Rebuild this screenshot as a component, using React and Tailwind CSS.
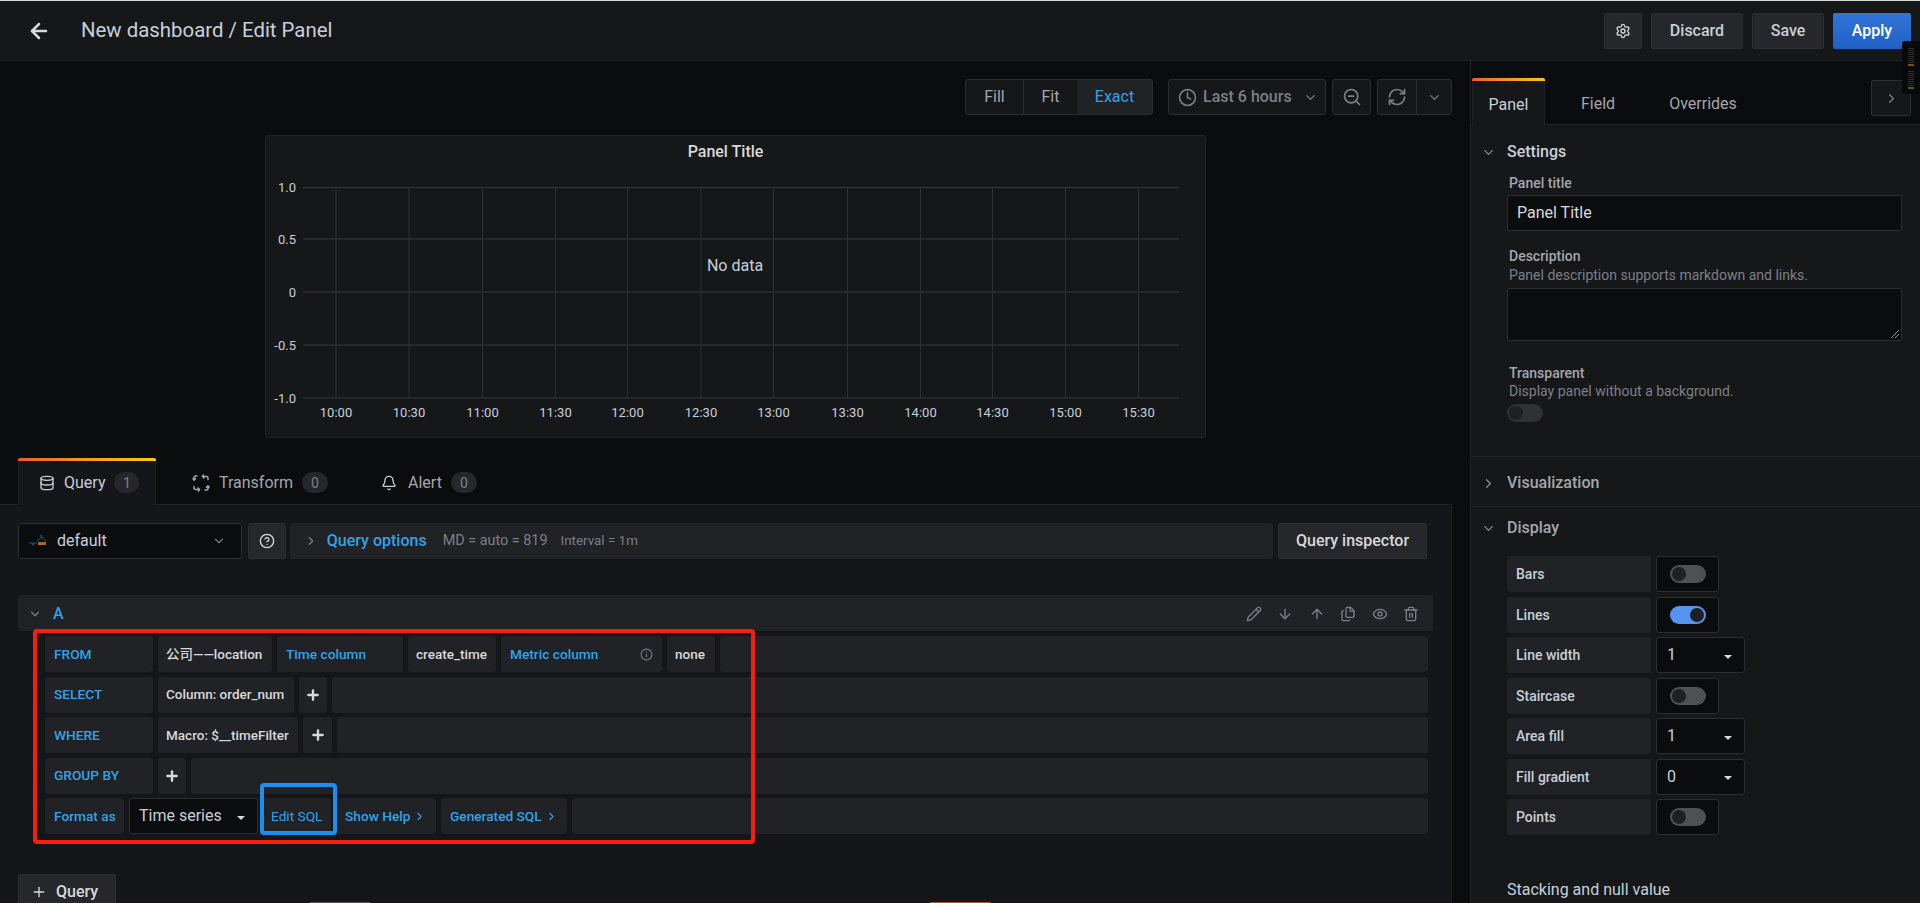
import React from 'react';
import {
  ArrowDown, ArrowLeft, ArrowUp, Bell, ChevronDown, ChevronRight, CircleHelp, Clock, Database,
  Eye, Files, Info, Pencil, Plus, RefreshCw, Settings, Trash2, ZoomOut,
} from 'lucide-react';

const blue = 'text-[#33a2e5]';

const Cell = ({ w, link, grow, className = '', children }) => (
  <div
    className={`h-9 flex items-center rounded-[3px] bg-[#202226] font-medium whitespace-nowrap ${link ? `px-[9px] text-[13.7px] ${blue}` : 'px-2 text-[13.5px] text-[#d8d9da]'} ${grow ? 'flex-1' : 'shrink-0'} ${className}`}
    style={w ? { width: w } : undefined}
  >
    {children}
  </div>
);

const AddCell = ({ w }) => (
  <Cell w={w} className="justify-center !px-0">
    <Plus size={16} strokeWidth={3.5} />
  </Cell>
);

const Caret = () => (
  <span className="w-0 h-0 border-x-[4px] border-x-transparent border-t-[4px] border-t-[#d8d9da] mt-[3px]" />
);

const Toggle = ({ on, dim }) => (
  <span className={`flex items-center w-9 h-[18px] rounded-full px-[2px] ${on ? 'bg-[#5794f2] justify-end' : dim ? 'bg-[#2c3235]' : 'bg-[#4f5052]'}`}>
    <span className="w-[14px] h-[14px] rounded-full bg-[#1f2024]" />
  </span>
);

const GroupHeader = ({ open, children }) => (
  <div className="flex items-center text-base text-[#a3a7ad] font-medium">
    <span className="w-[26px] flex text-[#8e8e8e]">
      {open ? <ChevronDown size={15} /> : <ChevronRight size={15} />}
    </span>
    <span>{children}</span>
  </div>
);

const OptionRow = ({ label, children, select }) => (
  <div className="flex gap-[5px]">
    <div className="w-[144px] h-9 flex items-center pl-[9px] rounded-[3px] bg-[#202226] text-sm font-medium text-[#c7d0d9]">{label}</div>
    {select !== undefined ? (
      <div className="w-[89px] h-9 flex items-center justify-between pl-[10px] pr-3 rounded-[3px] border border-[#2c2e33] bg-[#0b0c0e] text-base text-[#c7d0d9]">
        {select}
        <Caret />
      </div>
    ) : (
      <div className="w-[63px] h-9 flex items-center justify-center rounded-[3px] border border-[#2c2e33] bg-[#0b0c0e]">{children}</div>
    )}
  </div>
);

const TabGradient = () => (
  <span className="absolute -top-px -left-px -right-px h-[3px] rounded-t-[2px] bg-gradient-to-r from-[#f05a28] to-[#fbca0a]" />
);

const TransformIcon = () => (
  <svg width="18" height="18" viewBox="0 0 18 18" fill="none" stroke="currentColor" strokeWidth="1.5" strokeLinecap="round" strokeLinejoin="round">
    <path d="M2 6V3.500C2 2.700 2.700 2 3.500 2H5" />
    <path d="M1 4.500 2 6l1.500-1.200" />
    <path d="M11 2.500h3.500c.8 0 1.500.7 1.500 1.500v1.500" />
    <path d="M11.500 1 10.500 2.500 12 4" />
    <path d="M16 12v2.500c0 .8-.7 1.500-1.500 1.500H13" />
    <path d="M17 13.500 16 12l-1.500 1.200" />
    <path d="M7 15.500H3.500C2.700 15.500 2 14.800 2 14v-1.500" />
    <path d="M6.500 17l1-1.500L6 14" />
  </svg>
);

const MysqlIcon = () => (
  <svg width="20" height="14" viewBox="0 0 20 14" fill="none">
    <path d="M1 9h3l1 2 1-2h3" stroke="#00618a" strokeWidth="1.200" />
    <path d="M9 7c3-1 4-4 4-6 1 2 2 4 5 6" stroke="#00618a" strokeWidth="1" />
    <rect x="10" y="8" width="8" height="3" fill="#e48e00" opacity="0.75" />
  </svg>
);

const hours = ['10:00', '10:30', '11:00', '11:30', '12:00', '12:30', '13:00', '13:30', '14:00', '14:30', '15:00', '15:30'];
const xs = [71, 144, 217.5, 290.5, 362.5, 436, 508.5, 582.5, 655.5, 727.5, 800.5, 873.5];
const ys = [
  [52.5, '1.0'], [104, '0.5'], [157, '0'], [210, '-0.5'], [263, '-1.0'],
];

const GraphPanel = () => (
  <div className="relative ml-[265px] w-[941px] h-[303px] rounded-[3px] border border-[#202226] bg-[#161719]">
    <div className="text-center text-base font-medium text-[#d8d9da] pt-1 pr-5">Panel Title</div>
    <svg className="absolute -left-px -top-px" width="941" height="303" fill="none">
      {ys.map(([y]) => <line key={y} x1="38" x2="914" y1={y} y2={y} stroke="#36383c" strokeWidth="1" />)}
      {xs.map((x) => <line key={x} x1={x} x2={x} y1="52" y2="263" stroke="#2e3034" />)}
      {ys.map(([y, label]) => (
        <text key={label} x="31" y={y + 4.5} textAnchor="end" fill="#c7d0d9" fontSize="13">{label}</text>
      ))}
      {hours.map((h, i) => (
        <text key={h} x={xs[i]} y="282" textAnchor="middle" fill="#c7d0d9" fontSize="13">{h}</text>
      ))}
      <text x="470" y="136" textAnchor="middle" fill="#c7d0d9" fontSize="16">No data</text>
    </svg>
  </div>
);

const TopBar = () => (
  <header className="h-[60px] flex items-center bg-[#161719] border-b border-[#202226] pl-[27px] pr-[9px] shrink-0">
    <ArrowLeft size={24} strokeWidth={2.5} className="text-[#d8d9da]" />
    <div className="ml-[30px] text-[20.4px] text-[#c7d0d9] font-normal">New dashboard / Edit Panel</div>
    <div className="ml-auto flex items-center gap-[9px]">
      <button className="w-[38px] h-9 flex items-center justify-center rounded-[2px] border border-[#2c2e33] bg-[#25272b] text-[#d8d9da]"><Settings size={16} /></button>
      <button className="w-[92px] h-9 rounded-[2px] border border-[#2c2e33] bg-[#25272b] text-base font-medium text-[#c7d0d9]">Discard</button>
      <button className="w-[72px] h-9 rounded-[2px] border border-[#2c2e33] bg-[#25272b] text-base font-medium text-[#c7d0d9]">Save</button>
      <button className="w-[78px] h-9 rounded-[2px] bg-gradient-to-b from-[#3274d9] to-[#1f60c4] text-base font-medium text-white">Apply</button>
    </div>
  </header>
);

const PanelToolbar = () => (
  <div className="flex justify-end items-center h-9 mt-[18px] pr-[18px] w-[1470px]">
    <div className="flex h-9 rounded-[3px] border border-[#2c2e33] text-base text-[#a3a7ad] bg-[#161719]">
      <div className="w-[58px] flex items-center justify-center border-r border-[#2c2e33]">Fill</div>
      <div className="w-[53px] flex items-center justify-center">Fit</div>
      <div className={`w-[75px] flex items-center justify-center bg-[#202226] ${blue}`}>Exact</div>
    </div>
    <div className="ml-[15px] w-[158px] h-9 flex items-center pl-[9px] rounded-[3px] border border-[#2c2e33] bg-[#161719] text-base font-medium text-[#7b8087]">
      <Clock size={19} className="mr-[6px]" />
      Last 6 hours
      <ChevronDown size={15} className="ml-auto mr-[7px]" />
    </div>
    <div className="ml-[6px] w-[39px] h-9 flex items-center justify-center rounded-[3px] border border-[#2c2e33] bg-[#161719] text-[#7b8087]">
      <ZoomOut size={20} />
    </div>
    <div className="ml-[6px] w-[75px] h-9 flex rounded-[3px] border border-[#2c2e33] bg-[#161719] text-[#7b8087]">
      <div className="w-[39px] flex items-center justify-center border-r border-[#2c2e33]"><RefreshCw size={20} /></div>
      <div className="flex-1 flex items-center justify-center"><ChevronDown size={15} /></div>
    </div>
  </div>
);

const QueryTabs = () => (
  <div className="flex items-center h-[45px] mt-[21px] pl-[18px] text-base text-[#a3a7ad]">
    <div className="relative w-[138px] h-[46px] flex items-center pl-5 pt-[2px] bg-[#141619] border-x border-[#202226] z-10">
      <TabGradient />
      <Database size={16} className="text-[#c7d0d9]" />
      <span className="ml-[9px] text-[#c7d0d9]">Query</span>
      <span className="ml-[9px] w-[25px] h-[21px] flex items-center justify-center rounded-full bg-[#25272b] text-sm text-[#7b8087]">1</span>
    </div>
    <div className="flex items-center ml-[36px] pt-[2px]">
      <TransformIcon />
      <span className="ml-[9px]">Transform</span>
      <span className="ml-[9px] w-[26px] h-[21px] flex items-center justify-center rounded-full bg-[#25272b] text-sm text-[#7b8087]">0</span>
    </div>
    <div className="flex items-center ml-[53px] pt-[2px]">
      <Bell size={16} className="text-[#c7d0d9]" />
      <span className="ml-[11px]">Alert</span>
      <span className="ml-[9px] w-[26px] h-[21px] flex items-center justify-center rounded-full bg-[#25272b] text-sm text-[#7b8087]">0</span>
    </div>
  </div>
);

const QueryEditor = () => (
  <div className="relative w-[1452px] flex-1 bg-[#141619] border-t border-r border-[#202226] pl-[18px] pt-[18px]">
    <div className="flex gap-[5px] h-9 pr-6">
      <div className="w-[224px] flex items-center pl-[9px] pr-[15px] rounded-[3px] border border-[#2c2e33] bg-[#0b0c0e] text-base text-[#c7d0d9]">
        <MysqlIcon />
        <span className="ml-[9px]">default</span>
        <ChevronDown size={14} className="ml-auto text-[#7b8087]" />
      </div>
      <div className="w-[38px] ml-[1px] flex items-center justify-center rounded-[3px] border border-[#2c2e33] bg-[#25272b] text-[#d8d9da]">
        <CircleHelp size={16} />
      </div>
      <div className="w-[984px] -ml-[1px] flex items-center pl-[14px] rounded-[3px] bg-[#202226] text-sm">
        <ChevronRight size={14} className="text-[#7b8087]" />
        <span className={`ml-[9px] text-base font-medium ${blue}`}>Query options</span>
        <span className="ml-[16px] text-[#7b8087] text-[14.4px]">MD = auto = 819</span>
        <span className="ml-[13px] text-[#7b8087] text-[13.4px]">Interval = 1m</span>
      </div>
      <div className="w-[149px] flex items-center justify-center rounded-[2px] border border-[#2c2e33] bg-[#25272b] text-base font-medium text-[#d8d9da]">Query inspector</div>
    </div>

    <div className="w-[1415px] h-9 mt-9 flex items-center pt-[2px] rounded-[2px] bg-[#202226] pl-[10px] pr-[14px]">
      <ChevronDown size={14} className="text-[#7b8087]" />
      <span className={`ml-[11px] text-base font-medium ${blue}`}>A</span>
      <div className="ml-auto flex items-center gap-[15.5px] text-[#7b8087]">
        <Pencil size={16} />
        <ArrowDown size={16} />
        <ArrowUp size={16} />
        <Files size={16} />
        <Eye size={16} />
        <Trash2 size={16} />
      </div>
    </div>

    <div className="flex flex-col gap-[4.5px] mt-[5px] ml-[27px] w-[1383px]">
      <div className="flex gap-[5px]">
        <Cell w={108} link>FROM</Cell>
        <Cell w={114}>公司——location</Cell>
        <Cell w={126} link>Time column</Cell>
        <Cell w={88}>create_time</Cell>
        <Cell w={161} link className="justify-between">
          Metric column
          <Info size={13} className="text-[#7b8087]" />
        </Cell>
        <Cell w={48}>none</Cell>
        <Cell grow />
      </div>
      <div className="flex gap-[5px]">
        <Cell w={108} link>SELECT</Cell>
        <Cell w={136}>Column: order_num</Cell>
        <AddCell w={28} />
        <Cell grow />
      </div>
      <div className="flex gap-[5px]">
        <Cell w={108} link>WHERE</Cell>
        <Cell w={140}>Macro: $__timeFilter</Cell>
        <AddCell w={29} />
        <Cell grow />
      </div>
      <div className="flex gap-[5px]">
        <Cell w={108} link>GROUP BY</Cell>
        <AddCell w={28} />
        <Cell grow />
      </div>
      <div className="flex gap-[5px]">
        <Cell w={79} link>Format as</Cell>
        <div className="w-[129px] h-9 flex items-center justify-between pl-[9px] pr-3 rounded-[3px] border border-[#2c2e33] bg-[#0b0c0e] text-base text-[#c7d0d9]">
          Time series
          <Caret />
        </div>
        <Cell w={68} link className="!px-2 !font-normal">Edit SQL</Cell>
        <Cell w={100} link>Show Help<ChevronRight size={13} className="ml-[3px] mt-px" /></Cell>
        <Cell w={126} link>Generated SQL<ChevronRight size={13} className="ml-[3px] mt-px" /></Cell>
        <Cell grow />
      </div>
    </div>

    <button className="mt-10 w-[98px] h-9 flex items-center pl-3 rounded-[2px] border border-[#2c2e33] bg-[#25272b] text-base font-medium text-[#d8d9da]">
      <Plus size={16} className="mr-[9px]" />
      Query
    </button>
  </div>
);

const SidePanel = () => (
  <aside className="flex-1 flex flex-col border-l border-[#202226]">
    <div className="h-[64px] flex items-end pl-px pr-[9px] border-b border-[#202226] text-base text-[#a3a7ad]">
      <div className="relative w-[73px] h-[46px] flex items-center justify-center pt-[5px] -mb-px bg-[#161719] border-x border-[#202226] text-[#c7d0d9]">
        <TabGradient />
        Panel
      </div>
      <div className="h-[45px] flex items-center pt-[5px] ml-[36px]">Field</div>
      <div className="h-[45px] flex items-center pt-[5px] ml-[54px]">Overrides</div>
      <div className="self-start mt-[19px] ml-auto w-10 h-9 flex items-center justify-center rounded-[2px] border border-[#2c2e33] bg-[#161719] text-[#7b8087]">
        <ChevronRight size={15} />
      </div>
    </div>
    <div className="flex-1 bg-[#161719] overflow-hidden">
      <div className="h-[332px] border-b border-[#202226] pt-[15px] pl-[10px]">
        <GroupHeader open><span className="text-[#c7d0d9]">Settings</span></GroupHeader>
        <div className="pl-[26px] mt-[9px] w-[421px]">
          <div className="text-sm font-medium text-[#a3a7ad] pl-[2px]">Panel title</div>
          <div className="h-9 mt-[2px] flex items-center pl-[9px] rounded-[2px] border border-[#2c2e33] bg-[#0b0c0e] text-base text-[#d8d9da]">Panel Title</div>
          <div className="mt-[15px] text-sm font-medium text-[#a3a7ad] pl-[2px] leading-[20px]">Description</div>
          <div className="text-sm text-[#7b8087] pl-[2px] leading-[18px]">Panel description supports markdown and links.</div>
          <div className="relative h-[53px] mt-1 rounded-[2px] border border-[#2c2e33] bg-[#0b0c0e]">
            <svg className="absolute right-[1px] bottom-[1px]" width="10" height="10" stroke="#8e8e8e">
              <path d="M1 9 9 1M5 9 9 5" />
            </svg>
          </div>
          <div className="mt-[22px] text-sm font-medium text-[#a3a7ad] pl-[2px] leading-[20px]">Transparent</div>
          <div className="text-sm text-[#7b8087] pl-[2px] leading-[16px]">Display panel without a background.</div>
          <div className="mt-[5px]"><Toggle dim /></div>
        </div>
      </div>
      <div className="h-[50px] flex items-center pt-[3px] border-b border-[#202226] pl-[10px]"><GroupHeader>Visualization</GroupHeader></div>
      <div className="pt-[9px] pl-[10px]"><GroupHeader open>Display</GroupHeader></div>
      <div className="flex flex-col gap-[4.5px] mt-4 ml-9">
        <OptionRow label="Bars"><Toggle /></OptionRow>
        <OptionRow label="Lines"><Toggle on /></OptionRow>
        <OptionRow label="Line width" select="1" />
        <OptionRow label="Staircase"><Toggle /></OptionRow>
        <OptionRow label="Area fill" select="1" />
        <OptionRow label="Fill gradient" select="0" />
        <OptionRow label="Points"><Toggle /></OptionRow>
      </div>
      <div className="mt-[43px] ml-9 text-base text-[#c7d0d9]">Stacking and null value</div>
    </div>
  </aside>
);

// browser extension meter sitting over the top right corner
const MeterWidget = () => (
  <div className="absolute left-[1902px] top-[40px] w-[18px] h-[53px] rounded-l-[3px] bg-[#08090a]">
    <svg width="18" height="53" stroke="#2e2e2e">
      {[7, 9, 11, 13, 15, 17, 19, 21, 30, 32, 34, 36, 38, 40, 42, 44].map((y) => (
        <line key={y} x1="6" x2="12" y1={y + 0.5} y2={y + 0.5} />
      ))}
      <line x1="6" x2="12" y1="24" y2="24" stroke="#f79420" />
      <line x1="6" x2="12" y1="47" y2="47" stroke="#73bf2e" />
    </svg>
  </div>
);

export default function App() {
  return (
    <div className="relative w-[1920px] h-[903px] overflow-hidden flex flex-col bg-[#0b0c0e] border-t border-[#d9d9d9] font-['Roboto','Noto_Sans_CJK_SC',sans-serif]">
      <TopBar />
      <div className="flex-1 flex min-h-0">
        <main className="w-[1470px] flex flex-col">
          <PanelToolbar />
          <div className="mt-5"><GraphPanel /></div>
          <QueryTabs />
          <QueryEditor />
        </main>
        <SidePanel />
      </div>
      {/* hand drawn annotations on the screenshot */}
      <div className="absolute left-[33px] top-[628px] w-[722px] h-[215px] border-4 border-[#f51f10] rounded-[4px]" />
      <div className="absolute left-[260px] top-[782px] w-[77px] h-[52px] border-4 border-[#1a8fee] rounded-[4px]" />
      <MeterWidget />
      <div className="absolute left-[310px] bottom-0 w-[60px] h-px bg-[#555659]" />
      <div className="absolute left-[930px] bottom-0 w-[61px] h-px bg-[#b4561a]" />
    </div>
  );
}
